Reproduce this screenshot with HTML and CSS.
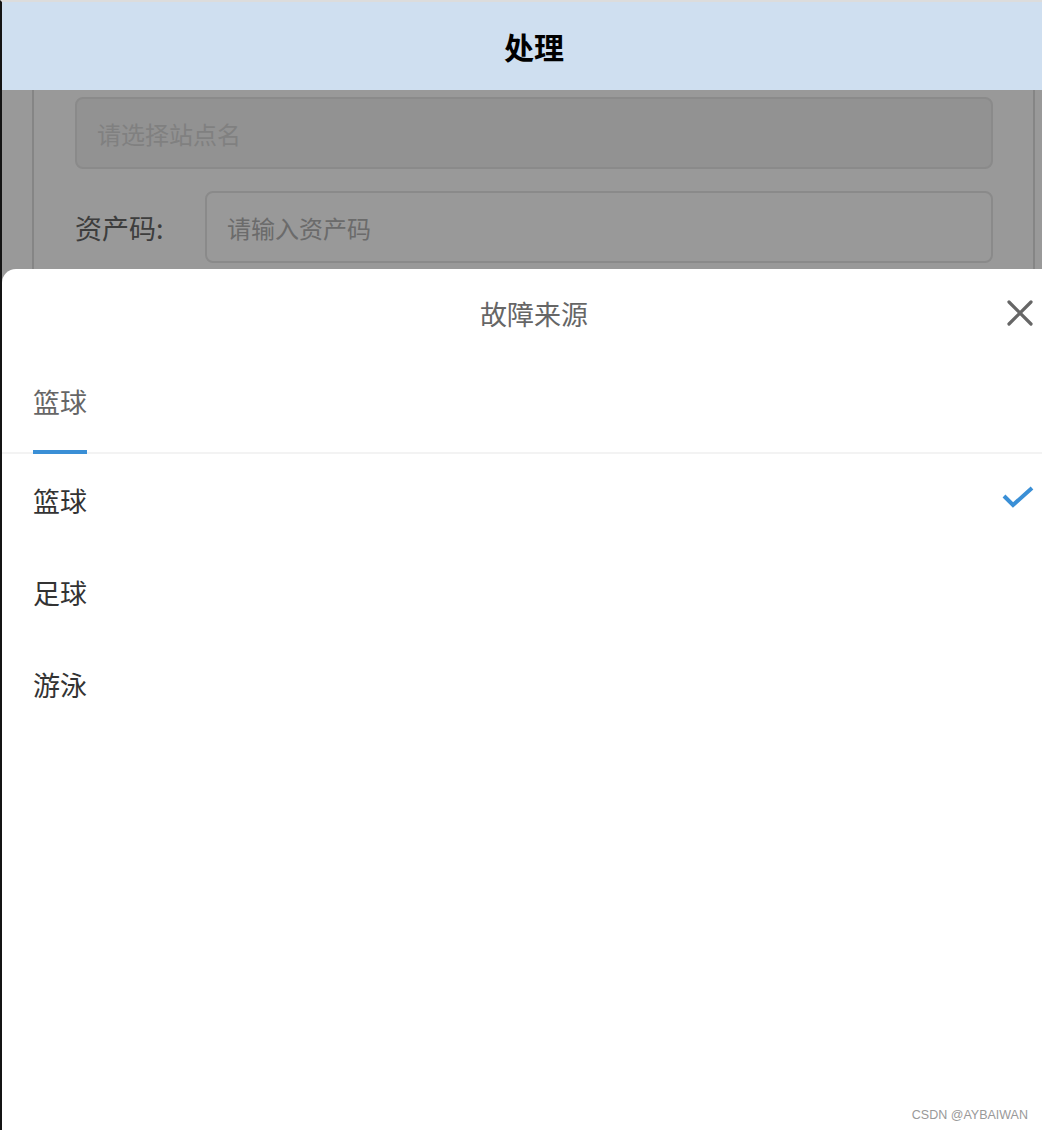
FILE: index.html
```html
<!DOCTYPE html>
<html lang="zh-CN">
<head>
    <meta charset="UTF-8">
    <meta name="viewport" content="width=device-width, initial-scale=1.0">
    <title>处理</title>
    <link rel="stylesheet" href="styles.css">
</head>
<body>
    <div class="app">
        <header class="nav-bar">处理</header>

        <div class="stage">
            <!-- form behind the popup -->
            <div class="form-card">
                <div class="field">
                    <div class="input disabled">请选择站点名</div>
                </div>
                <div class="field">
                    <label class="field-label">资产码:</label>
                    <div class="input">请输入资产码</div>
                </div>
            </div>

            <div class="mask"></div>

            <!-- picker popup -->
            <div class="sheet">
                <div class="sheet-head">
                    <span class="sheet-title">故障来源</span>
                    <span class="sheet-close">
                        <svg width="26" height="26" viewBox="0 0 26 26">
                            <path d="M2 2 L24 24 M24 2 L2 24" stroke="#666" stroke-width="3.2" stroke-linecap="round" fill="none"/>
                        </svg>
                    </span>
                </div>

                <div class="tabs">
                    <div class="tab active">篮球</div>
                </div>

                <ul class="options">
                    <li class="option selected">
                        <span>篮球</span>
                        <svg class="check" width="32" height="24" viewBox="0 0 32 24">
                            <path d="M2 11 L11 20 L30 3" stroke="#3a8fd6" stroke-width="4" fill="none"/>
                        </svg>
                    </li>
                    <li class="option"><span>足球</span></li>
                    <li class="option"><span>游泳</span></li>
                </ul>

                <div class="watermark">CSDN @AYBAIWAN</div>
            </div>
        </div>
    </div>
</body>
</html>
```

FILE: styles.css
```css
* {
    box-sizing: border-box;
}

html, body {
    margin: 0;
    padding: 0;
    height: 100%;
}

body {
    font-family: "Noto Sans CJK SC", "Noto Sans", sans-serif;
    background: #fff;
}

.app {
    height: 100vh;
    display: flex;
    flex-direction: column;
    border-left: 2px solid #141414;
    border-top: 2px solid #dcdcdc;
    overflow: hidden;
}

.nav-bar {
    height: 88px;
    flex-shrink: 0;
    background-color: #cfdff0;
    display: flex;
    align-items: center;
    justify-content: center;
    padding-left: 24px;
    font-size: 30px;
    font-weight: bold;
    color: #000;
    position: relative;
    z-index: 3;
}

.stage {
    flex: 1;
    position: relative;
    background: #fff;
}

.form-card {
    margin: 0 7px 0 30px;
    padding: 7px 40px 0 41px;
    border: 2px solid #dedede;
    border-top: none;
    height: 300px;
    background: #fff;
}

.field {
    display: flex;
    align-items: center;
    margin-bottom: 22px;
}

.field-label {
    width: 130px;
    font-size: 27px;
    color: #666;
    flex-shrink: 0;
}

.input {
    flex: 1;
    height: 72px;
    border: 2px solid #e6e6e6;
    border-radius: 8px;
    padding: 0 20px;
    display: flex;
    align-items: center;
    font-size: 24px;
    color: #b2b2b2;
    background: #fff;
}

.input.disabled {
    background: #f3f3f3;
    color: #d6d6d6;
}

.mask {
    position: absolute;
    inset: 0;
    background: rgba(0, 0, 0, 0.4);
}

.sheet {
    position: absolute;
    top: 179px;
    left: 0;
    right: 0;
    bottom: 0;
    background: #fff;
    border-top-left-radius: 14px;
    z-index: 2;
}

.sheet-head {
    height: 88px;
    display: flex;
    align-items: center;
    justify-content: center;
    padding-left: 24px;
    position: relative;
}

.sheet-title {
    font-size: 27px;
    color: #666;
}

.sheet-close {
    position: absolute;
    right: 9px;
    top: 31px;
    line-height: 0;
}

.tabs {
    height: 97px;
    padding: 0 31px;
    display: flex;
    border-bottom: 2px solid #f3f3f3;
}

.tab {
    font-size: 27px;
    color: #666;
    display: flex;
    align-items: center;
    padding-bottom: 5px;
    border-bottom: 4px solid #3a8fd6;
    margin-bottom: -2px;
}

.options {
    list-style: none;
    margin: 0;
    padding: 0;
}

.option {
    height: 92px;
    padding: 0 8px 0 31px;
    display: flex;
    align-items: center;
    justify-content: space-between;
    font-size: 27px;
    color: #333;
}

.check {
    margin-top: -7px;
}

.watermark {
    position: absolute;
    right: 14px;
    bottom: 8px;
    font-family: "Liberation Sans", Arial, sans-serif;
    font-size: 12.5px;
    color: #999;
}
```
